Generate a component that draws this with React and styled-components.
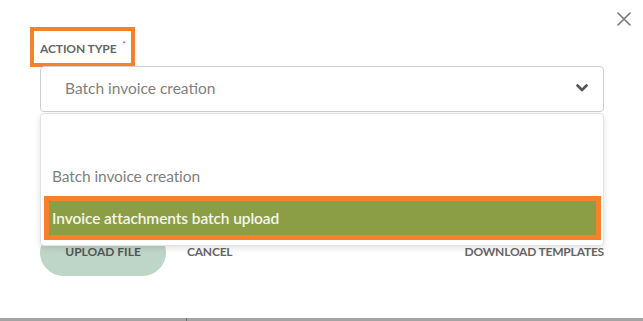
import styled, { createGlobalStyle } from 'styled-components';

const GlobalStyle = createGlobalStyle`
  html, body {
    margin: 0;
    padding: 0;
    background: #ffffff;
  }
  body {
    font-family: Lato, "Open Sans", "Liberation Sans", sans-serif;
  }
`

const Page = styled.div`
  width: 643px;
  height: 321px;
  display: flex;
  flex-direction: column;
  overflow: hidden;
`

const Dialog = styled.div`
  position: relative;
  height: 318px;
  box-sizing: border-box;
  padding: 27px 39px 0 40px;
  background: #fff;
`

const CloseButton = styled.button`
  position: absolute;
  top: 11px;
  right: 12px;
  width: 15px;
  height: 15px;
  padding: 0;
  border: none;
  background: none;
  display: flex;
  align-items: center;
  justify-content: center;
  cursor: pointer;
`

const LabelBox = styled.div`
  display: inline-flex;
  align-items: flex-start;
  margin-left: -10px;
  height: 40px;
  box-sizing: border-box;
  border: 4px solid #f5822a;
  padding: 10px 0 0 6px;
  width: 105px;
`

const Label = styled.span`
  font-size: 12px;
  font-weight: 700;
  color: #666;
  letter-spacing: -0.1px;
`

const Required = styled.span`
  color: #d0284a;
  font-size: 8px;
  margin-left: 6px;
  margin-top: -2px;
`

const Field = styled.div`
  position: relative;
  margin-top: -1px;
`

const SelectBox = styled.div`
  height: 46px;
  box-sizing: border-box;
  border: 1px solid #cfcfcf;
  border-radius: 4px;
  display: flex;
  align-items: center;
  justify-content: space-between;
  padding: 0 15px 2px 24px;
  font-size: 15.5px;
  color: #7f7f7f;
`

const Menu = styled.ul`
  position: absolute;
  top: 47px;
  left: 0;
  right: 0;
  margin: 0;
  padding: 2px 2px 5px 3px;
  list-style: none;
  background: #fff;
  border: 1px solid #e2e2e2;
  border-radius: 4px;
  box-shadow: 0 2px 6px rgba(0, 0, 0, 0.12);
  z-index: 2;
`

const Option = styled.li`
  box-sizing: border-box;
  display: flex;
  align-items: center;
  padding-left: 8px;
  font-size: 15.5px;
  letter-spacing: -0.1px;
  color: ${p => (p.$active ? '#f4f6ea' : '#7f7f7f')};
  font-weight: ${p => (p.$active ? 600 : 400)};
  background: ${p => (p.$active ? '#8c9e45' : 'transparent')};
  box-shadow: ${p => (p.$active ? 'inset 0 0 0 5px #f5822a' : 'none')};
  height: ${p => (p.$active ? '44px' : '40px')};
`

const Footer = styled.div`
  display: flex;
  align-items: center;
  margin-top: 117px;
  gap: 21px;
`

const PrimaryButton = styled.button`
  width: 126px;
  height: 47px;
  padding: 0 0 2px;
  border: none;
  border-radius: 24px;
  background: #bed6c8;
  color: #555;
  font-family: inherit;
  font-size: 12px;
  font-weight: 700;
`

const TextButton = styled.button`
  border: none;
  background: none;
  padding: 0 0 2px;
  color: #666;
  font-family: inherit;
  font-size: 12px;
  font-weight: 700;
  letter-spacing: -0.2px;
  margin-left: ${p => (p.$push ? 'auto' : '0')};
`

const Backdrop = styled.div`
  flex: 1;
  display: flex;
  background: #a3a3a3;
`

const BackdropCell = styled.div`
  width: 186px;
  border-right: 1px solid #6f6f6f;
`

const Chevron = () => (
  <svg width="12" height="8" viewBox="0 0 12 8">
    <polyline points="1.5,1.5 6,6 10.5,1.5" fill="none" stroke="#555" strokeWidth="2.6" strokeLinecap="round" strokeLinejoin="round" />
  </svg>
)

const CloseIcon = () => (
  <svg width="14" height="14" viewBox="0 0 14 14">
    <path d="M1 1 L13 13 M13 1 L1 13" stroke="#777" strokeWidth="1.6" strokeLinecap="round" />
  </svg>
)

const App = () => {
  return (
    <Page>
      <GlobalStyle />
      <Dialog>
        <CloseButton aria-label="Close">
          <CloseIcon />
        </CloseButton>
        <LabelBox>
          <Label>ACTION TYPE</Label>
          <Required>*</Required>
        </LabelBox>
        <Field>
          <SelectBox>
            <span>Batch invoice creation</span>
            <Chevron />
          </SelectBox>
          <Menu>
            <Option />
            <Option>Batch invoice creation</Option>
            <Option $active>Invoice attachments batch upload</Option>
          </Menu>
        </Field>
        <Footer>
          <PrimaryButton>UPLOAD FILE</PrimaryButton>
          <TextButton>CANCEL</TextButton>
          <TextButton $push>DOWNLOAD TEMPLATES</TextButton>
        </Footer>
      </Dialog>
      <Backdrop>
        <BackdropCell />
      </Backdrop>
    </Page>
  )
};

export default App;
